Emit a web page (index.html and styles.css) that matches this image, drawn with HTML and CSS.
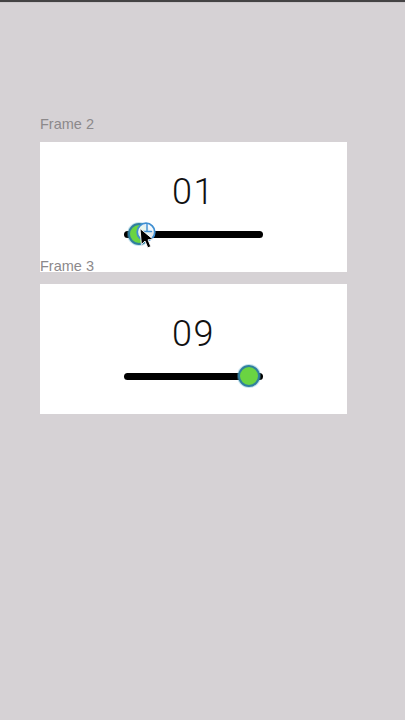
FILE: index.html
```html
<!DOCTYPE html>
<html lang="en">
<head>
<meta charset="utf-8">
<title>Frames</title>
<link rel="stylesheet" href="styles.css">
</head>
<body>
<div class="topbar"></div>
<main class="canvas">
  <section class="frame">
    <div class="frame-label">Frame 2</div>
    <div class="card">
      <div class="value">01</div>
      <div class="slider">
        <div class="thumb" style="left:4px"></div>
        <svg class="cursor" width="32" height="36" viewBox="0 0 32 36">
          <circle cx="18" cy="15" r="8.8" fill="#f4f8fc" fill-opacity="0.92" stroke="#3f8fd2" stroke-width="1.8"/>
          <path d="M19 7.5 V13.5 M13.5 14.5 H23.5" stroke="#3f8fd2" stroke-width="1.4" fill="none" stroke-linecap="round"/>
          <path d="M12 11.5 L13.4 27.5 L17 24 L19.8 30.8 L22.8 29.6 L20 22.8 L25.2 22.4 Z" fill="#000" stroke="#fff" stroke-width="0.9" stroke-linejoin="round"/>
        </svg>
      </div>
    </div>
  </section>
  <section class="frame frame-overlap">
    <div class="frame-label">Frame 3</div>
    <div class="card">
      <div class="value">09</div>
      <div class="slider">
        <div class="thumb" style="left:114px"></div>
      </div>
    </div>
  </section>
</main>
</body>
</html>
```

FILE: styles.css
```css
html, body {
  margin: 0;
  padding: 0;
}

body {
  background: #d6d2d5;
  height: 720px;
  font-family: "Liberation Sans", Arial, sans-serif;
}

.topbar {
  height: 2px;
  background: #444344;
  border-bottom: 1px solid #cbc7ca;
}

.canvas {
  padding: 113px 0 0 40px;
  width: 307px;
}

.frame-label {
  font-size: 14.5px;
  line-height: 16px;
  color: #8c898b;
  margin-bottom: 10px;
}

.frame-overlap {
  margin-top: -14px;
}

.card {
  background: #ffffff;
  height: 130px;
  box-sizing: border-box;
  padding-top: 30px;
  display: flex;
  flex-direction: column;
  align-items: center;
}

.value {
  font-family: Roboto, "Liberation Sans", sans-serif;
  font-weight: 300;
  font-size: 36px;
  line-height: 40px;
  color: #111111;
  letter-spacing: 1.5px;
}

.slider {
  position: relative;
  width: 139px;
  height: 22px;
  margin-top: 11px;
}

.slider::before {
  content: "";
  position: absolute;
  left: 0;
  right: 0;
  top: 8px;
  height: 7px;
  border-radius: 4px;
  background: #000000;
}

.thumb {
  position: absolute;
  top: 0;
  width: 22px;
  height: 22px;
  box-sizing: border-box;
  border-radius: 50%;
  background: #6ad442;
  border: 2px solid #2f7f9e;
  box-shadow: 0 0 0 1px rgba(90, 170, 200, 0.35);
}

.cursor {
  position: absolute;
  left: 4px;
  top: -6px;
}
```
